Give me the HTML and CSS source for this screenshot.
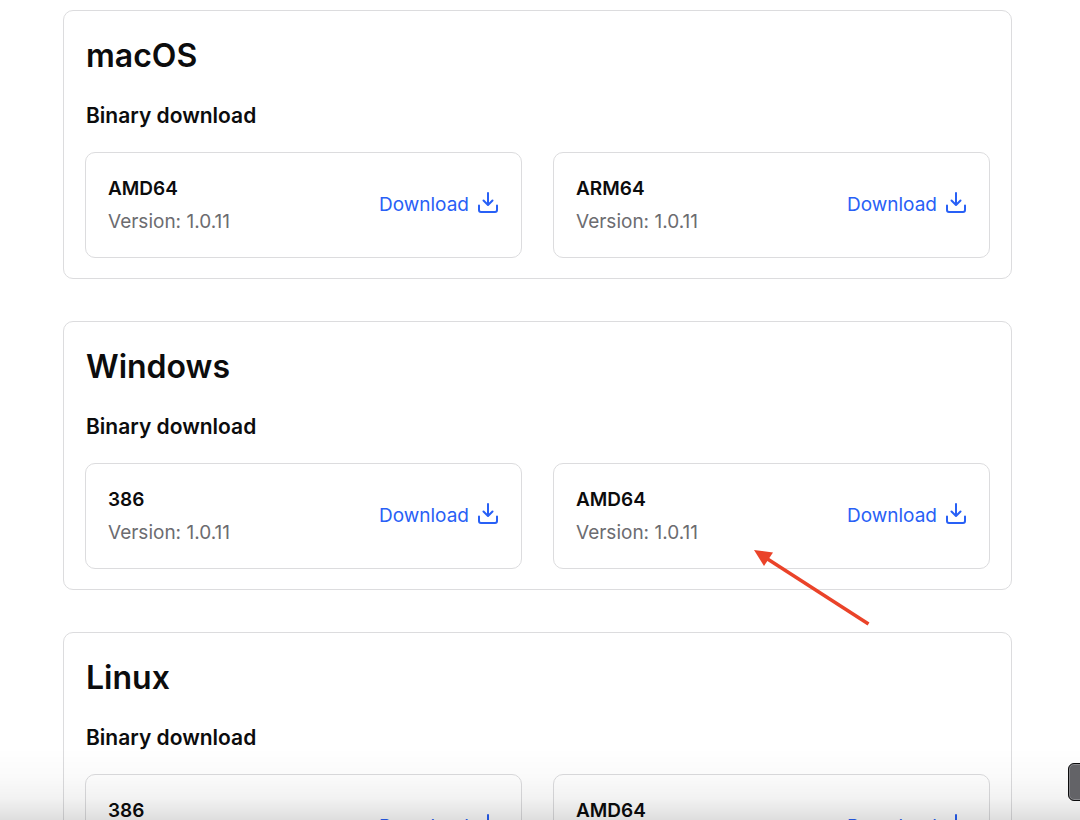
FILE: index.html
```
<!DOCTYPE html>
<html lang="en">
<head>
    <meta charset="UTF-8">
    <meta name="viewport" content="width=device-width, initial-scale=1.0">
    <title>Downloads</title>
    <link rel="stylesheet" href="styles.css">
</head>
<body>
    <!-- Shared download icon -->
    <svg class="sprite" aria-hidden="true">
        <symbol id="icon-download" viewBox="0 0 22 22">
            <path d="M11 1v11.500M6.500 8.500l4.500 4.500 4.500-4.500M2 13.500v4.500a2 2 0 0 0 2 2h14a2 2 0 0 0 2-2v-4.500" />
        </symbol>
    </svg>

    <main class="downloads">
        <section class="platform">
            <h2 class="platform-name">macOS</h2>
            <h3 class="platform-type">Binary download</h3>
            <div class="builds">
                <div class="build">
                    <div class="build-info">
                        <h4 class="build-name">AMD64</h4>
                        <p class="build-version">Version: 1.0.11</p>
                    </div>
                    <a class="build-link" href="#">Download <svg class="icon" aria-hidden="true"><use href="#icon-download" /></svg></a>
                </div>
                <div class="build">
                    <div class="build-info">
                        <h4 class="build-name">ARM64</h4>
                        <p class="build-version">Version: 1.0.11</p>
                    </div>
                    <a class="build-link" href="#">Download <svg class="icon" aria-hidden="true"><use href="#icon-download" /></svg></a>
                </div>
            </div>
        </section>

        <section class="platform">
            <h2 class="platform-name">Windows</h2>
            <h3 class="platform-type">Binary download</h3>
            <div class="builds">
                <div class="build">
                    <div class="build-info">
                        <h4 class="build-name">386</h4>
                        <p class="build-version">Version: 1.0.11</p>
                    </div>
                    <a class="build-link" href="#">Download <svg class="icon" aria-hidden="true"><use href="#icon-download" /></svg></a>
                </div>
                <div class="build">
                    <div class="build-info">
                        <h4 class="build-name">AMD64</h4>
                        <p class="build-version">Version: 1.0.11</p>
                    </div>
                    <a class="build-link" href="#">Download <svg class="icon" aria-hidden="true"><use href="#icon-download" /></svg></a>
                    <!-- Arrow pointing at this build -->
                    <svg class="pointer" viewBox="0 0 116 76" aria-hidden="true">
                        <path class="pointer-line" d="M12 8L114.500 74" />
                        <path class="pointer-head" d="M0 0l19 2.500L10 16z" />
                    </svg>
                </div>
            </div>
        </section>

        <section class="platform">
            <h2 class="platform-name">Linux</h2>
            <h3 class="platform-type">Binary download</h3>
            <div class="builds">
                <div class="build">
                    <div class="build-info">
                        <h4 class="build-name">386</h4>
                        <p class="build-version">Version: 1.0.11</p>
                    </div>
                    <a class="build-link" href="#">Download <svg class="icon" aria-hidden="true"><use href="#icon-download" /></svg></a>
                </div>
                <div class="build">
                    <div class="build-info">
                        <h4 class="build-name">AMD64</h4>
                        <p class="build-version">Version: 1.0.11</p>
                    </div>
                    <a class="build-link" href="#">Download <svg class="icon" aria-hidden="true"><use href="#icon-download" /></svg></a>
                </div>
            </div>
        </section>
    </main>

    <div class="bottom-fade"></div>
    <div class="side-tab"></div>
</body>
</html>
```

FILE: styles.css
```
* {
    box-sizing: border-box;
}

body {
    margin: 0;
    height: 100vh;
    overflow: hidden;
    background-color: #fff;
    color: #0c0c0d;
    font-family: Inter, "Liberation Sans", sans-serif;
}

h2, h3, h4, p {
    margin: 0;
}

.sprite {
    position: absolute;
    width: 0;
    height: 0;
}

.downloads {
    display: flex;
    flex-direction: column;
    gap: 42px;
    padding: 10px 68px 42px 63px;
}

.platform {
    padding: 22px 21px 20px;
    border: 1px solid #dcdcde;
    border-radius: 10px;
}

.platform-name,
.platform-type {
    padding: 0 1px;
    font-weight: 600;
}

.platform-name {
    font-size: 32px;
    line-height: 46px;
}

.platform-type {
    margin: 22px 0 21px;
    font-size: 21px;
    line-height: 30px;
}

.builds {
    display: grid;
    grid-template-columns: 1fr 1fr;
    gap: 31px;
}

.build {
    position: relative;
    display: flex;
    align-items: center;
    justify-content: space-between;
    padding: 19px 22px;
    border: 1px solid #dcdcde;
    border-radius: 10px;
}

.build-name,
.build-version {
    font-size: 19px;
    line-height: 33px;
}

.build-name {
    font-weight: 600;
}

.build-version {
    color: #6c6c70;
}

.build-link {
    display: flex;
    align-items: center;
    gap: 8px;
    color: #2860f6;
    font-size: 19px;
    line-height: 30px;
    text-decoration: none;
}

.icon {
    width: 22px;
    height: 22px;
    margin-bottom: 4px;
    fill: none;
    stroke: currentColor;
    stroke-width: 2;
    stroke-linecap: round;
    stroke-linejoin: round;
}

/* Red arrow lying over the card */
.pointer {
    position: absolute;
    top: 86px;
    left: 200px;
    z-index: 1;
    width: 116px;
    height: 76px;
}

.pointer-line {
    fill: none;
    stroke: #ea4329;
    stroke-width: 3.5;
}

.pointer-head {
    fill: #ea4329;
}

.bottom-fade {
    position: fixed;
    right: 0;
    bottom: 0;
    left: 0;
    height: 72px;
    background: linear-gradient(to bottom, rgba(0, 0, 0, 0), rgba(0, 0, 0, 0.02) 40%, rgba(0, 0, 0, 0.05) 70%, rgba(0, 0, 0, 0.13));
    pointer-events: none;
}

.side-tab {
    position: fixed;
    right: -8px;
    bottom: 19px;
    width: 20px;
    height: 38px;
    border: 1px solid #0b0b0c;
    border-radius: 6px;
    background-color: #636367;
    box-shadow: inset 0 0 0 1px #8a8a8e;
}
```
